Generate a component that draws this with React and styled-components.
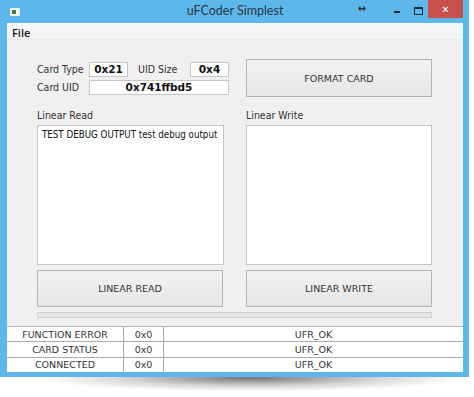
import React from "react";
import styled, { createGlobalStyle } from "styled-components";

const Global = createGlobalStyle`
  html, body { margin: 0; padding: 0; background: #ffffff; }
  body { width: 474px; height: 397px; overflow: hidden; font-family: "DejaVu Sans Condensed", "DejaVu Sans", Verdana, sans-serif; font-stretch: condensed; }
`;

const Page = styled.div`
  width: 474px;
  height: 397px;
  position: relative;
`;

const Window = styled.div`
  position: relative;
  z-index: 1;
  width: 469px;
  background: #5db7ea;
  padding: 0 6px 5px 7px;
  box-sizing: border-box;
  display: flex;
  flex-direction: column;
`;

const TitleBar = styled.div`
  height: 23px;
  display: flex;
  align-items: flex-start;
  position: relative;
`;

const AppIcon = styled.div`
  width: 8px;
  height: 6px;
  margin: 8px 0 0 3px;
  background: #f4f4f4;
  border: 1px solid #e8e8e8;
  display: flex;
  &::before {
    content: "";
    width: 4px;
    height: 4px;
    margin: 1px;
    background: #3d7d4a;
  }
`;

const Title = styled.div`
  position: absolute;
  left: 0;
  right: 0;
  top: 3px;
  text-align: center;
  font-family: "Lato", "Open Sans", sans-serif;
  font-stretch: normal;
  font-size: 12.5px;
  color: #2b3a45;
`;

const Controls = styled.div`
  margin-left: auto;
  display: flex;
  align-items: flex-start;
  height: 18px;
`;

const Resize = styled.div`
  margin-top: 2px;
  margin-right: 28px;
  font-size: 11px;
  font-weight: bold;
  color: #1d2a33;
`;

const MinBtn = styled.div`
  width: 6px;
  height: 2px;
  background: #1d2a33;
  margin: 11px 14px 0 0;
`;

const MaxBtn = styled.div`
  width: 7px;
  height: 5px;
  border: 1px solid #1d2a33;
  border-top-width: 2px;
  margin: 7px 5px 0 0;
`;

const CloseBtn = styled.div`
  width: 35px;
  height: 18px;
  background: #c9514d;
  color: #fff;
  font-family: "DejaVu Sans", sans-serif;
  font-weight: bold;
  font-size: 10px;
  display: flex;
  align-items: center;
  justify-content: center;
`;

const Client = styled.div`
  background: #f0f0f0;
  display: flex;
  flex-direction: column;
`;

const MenuBar = styled.div`
  height: 17px;
  background: linear-gradient(#f7f8f9, #f1f2f3);
  border-bottom: 1px solid #e9eaeb;
  display: flex;
  align-items: center;
  padding: 2px 0 0 5px;
  box-sizing: border-box;
  font-family: "Open Sans", sans-serif;
  font-stretch: normal;
  font-weight: 600;
  font-size: 11px;
  color: #1a1a1a;
`;

const Body = styled.div`
  padding: 19px 31px 0 30px;
  display: flex;
  flex-direction: column;
`;

const TopRow = styled.div`
  display: flex;
  align-items: center;
  height: 38px;
`;

const Info = styled.div`
  display: flex;
  flex-direction: column;
  gap: 3px;
  width: 192px;
`;

const InfoRow = styled.div`
  display: flex;
  align-items: center;
  height: 15px;
`;

const Label = styled.span`
  font-size: 10.5px;
  color: #333;
  width: ${(p) => p.$w || "auto"}px;
  margin-left: ${(p) => p.$ml || 0}px;
  flex-shrink: 0;
`;

const ValueBox = styled.div`
  width: ${(p) => p.$w}px;
  height: 15px;
  box-sizing: border-box;
  background: #fff;
  border: 1px solid #c5c5c5;
  font-family: "DejaVu Sans", sans-serif;
  font-stretch: normal;
  font-weight: bold;
  font-size: 10.5px;
  color: #111;
  display: flex;
  align-items: center;
  justify-content: center;
`;

const Button = styled.button`
  width: ${(p) => p.$w}px;
  height: ${(p) => p.$h}px;
  margin-left: ${(p) => p.$ml || 0}px;
  box-sizing: border-box;
  border: 1px solid #b4b4b4;
  background: linear-gradient(#f2f2f2, #e6e6e6);
  font-family: "DejaVu Sans", sans-serif;
  font-size: 9.5px;
  color: #333;
  padding: 0;
`;

const Grid = styled.div`
  display: grid;
  grid-template-columns: 187px 186px;
  column-gap: 22px;
  margin-top: 12px;
`;

const SectionLabel = styled.div`
  font-size: 10.5px;
  color: #333;
  height: 12px;
  line-height: 12px;
  margin-bottom: 4px;
`;

const TextArea = styled.div`
  height: 140px;
  box-sizing: border-box;
  background: #fff;
  border: 1px solid #c5c5c5;
  padding: 3px 4px;
  font-size: 9.7px;
  color: #111;
  margin-bottom: 5px;
`;

const Progress = styled.div`
  grid-column: 1 / 3;
  margin-top: 5px;
  height: 6px;
  box-sizing: border-box;
  border: 1px solid #cfcfcf;
  background: #e6e6e6;
`;

const Table = styled.div`
  margin-top: 8px;
  display: grid;
  grid-template-columns: 116px 39px 1fr;
  background: #ababab;
  row-gap: 1px;
  column-gap: 1px;
  border-top: 1px solid #b5b5b5;
`;

const Cell = styled.div`
  background: #fff;
  height: 14.3px;
  font-family: "DejaVu Sans", sans-serif;
  font-stretch: normal;
  font-size: 9.5px;
  color: #333;
  display: flex;
  align-items: center;
  justify-content: center;
`;

const Shadow = styled.div`
  position: absolute;
  left: 30px;
  right: 20px;
  top: 366px;
  height: 30px;
  background: radial-gradient(ellipse 50% 45% at 52% 40%, rgba(60,60,60,0.7), rgba(120,120,120,0.3) 60%, rgba(255,255,255,0) 100%);
`;

const rows = [
  ["FUNCTION ERROR", "0x0", "UFR_OK"],
  ["CARD STATUS", "0x0", "UFR_OK"],
  ["CONNECTED", "0x0", "UFR_OK"],
];

export default function App() {
  return (
    <Page>
      <Global />
      <Shadow />
      <Window>
        <TitleBar>
          <AppIcon />
          <Title>uFCoder Simplest</Title>
          <Controls>
            <Resize>↔</Resize>
            <MinBtn />
            <MaxBtn />
            <CloseBtn>✕</CloseBtn>
          </Controls>
        </TitleBar>
        <Client>
          <MenuBar>File</MenuBar>
          <Body>
            <TopRow>
              <Info>
                <InfoRow>
                  <Label $w={52}>Card Type</Label>
                  <ValueBox $w={39}>0x21</ValueBox>
                  <Label $w={52} $ml={10}>UID Size</Label>
                  <ValueBox $w={39}>0x4</ValueBox>
                </InfoRow>
                <InfoRow>
                  <Label $w={52}>Card UID</Label>
                  <ValueBox $w={140}>0x741ffbd5</ValueBox>
                </InfoRow>
              </Info>
              <Button $w={186} $h={38} $ml={17}>FORMAT CARD</Button>
            </TopRow>
            <Grid>
              <div>
                <SectionLabel>Linear Read</SectionLabel>
                <TextArea>TEST DEBUG OUTPUT test debug output</TextArea>
                <Button $w={186} $h={37}>LINEAR READ</Button>
              </div>
              <div>
                <SectionLabel>Linear Write</SectionLabel>
                <TextArea />
                <Button $w={186} $h={37}>LINEAR WRITE</Button>
              </div>
              <Progress />
            </Grid>
          </Body>
          <Table>
            {rows.map((r) => (
              <React.Fragment key={r[0]}>
                <Cell>{r[0]}</Cell>
                <Cell>{r[1]}</Cell>
                <Cell>{r[2]}</Cell>
              </React.Fragment>
            ))}
          </Table>
        </Client>
      </Window>
    </Page>
  );
}
